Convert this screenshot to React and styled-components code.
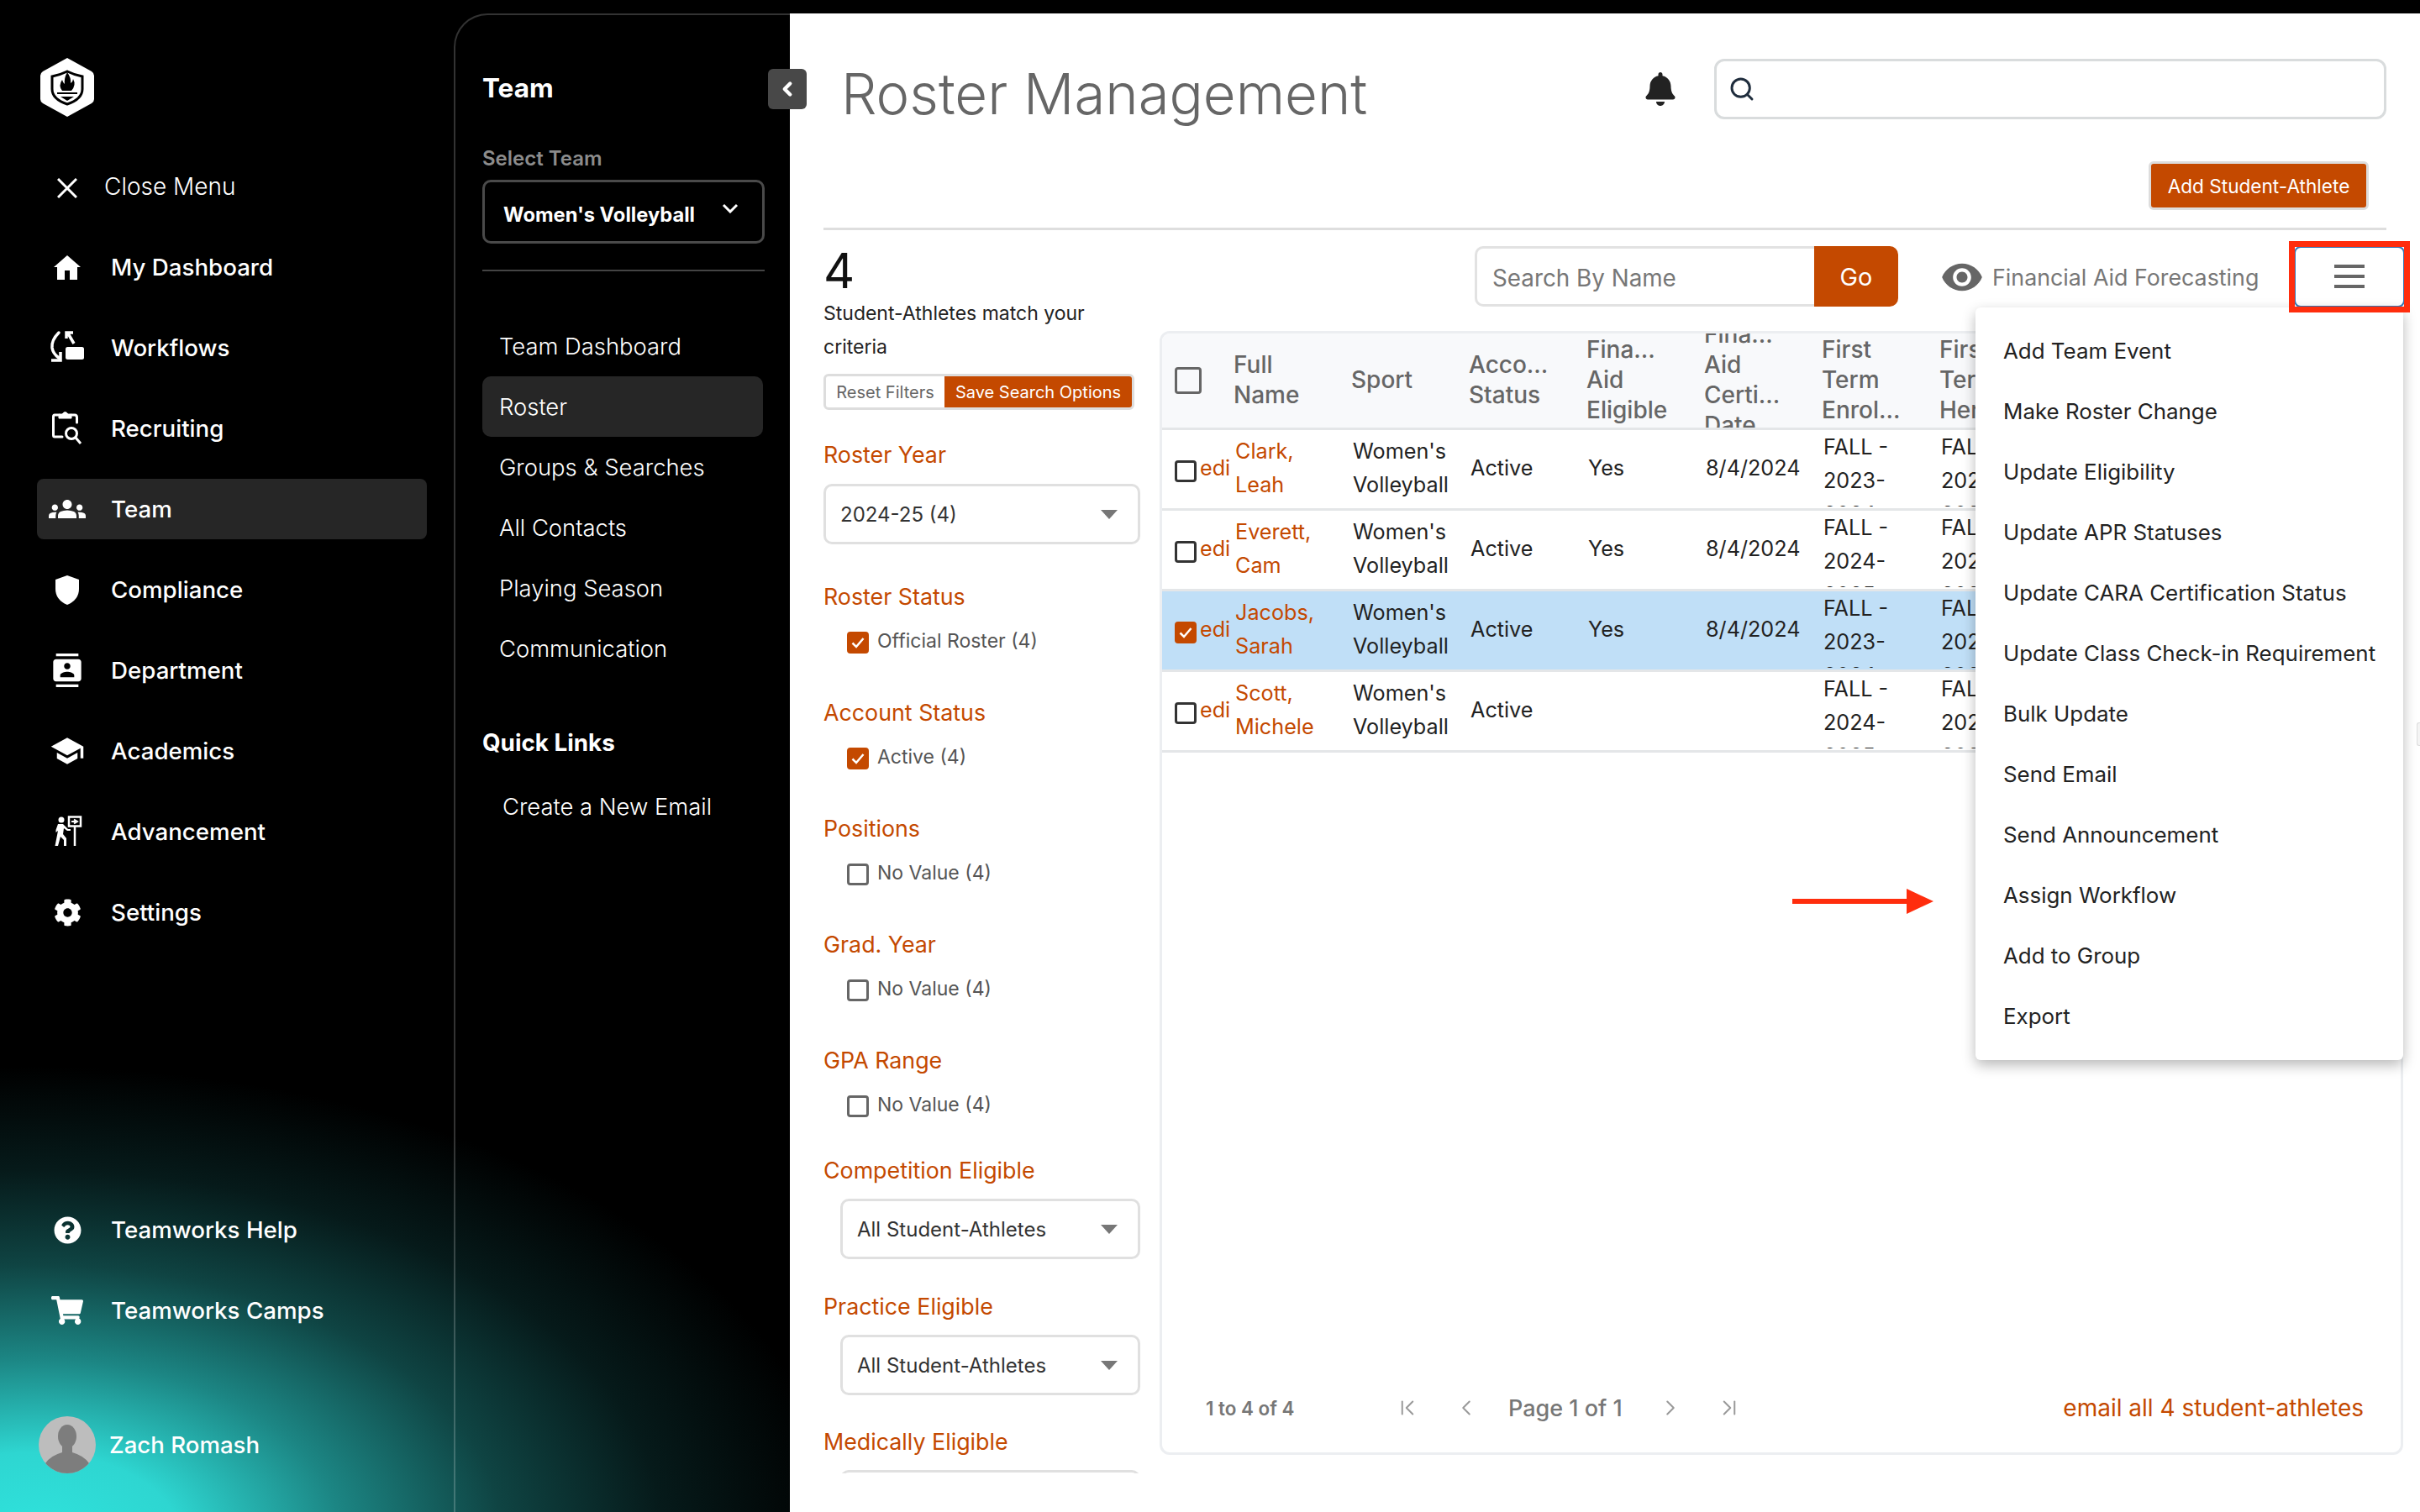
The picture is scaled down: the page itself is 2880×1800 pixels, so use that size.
import styled, { createGlobalStyle } from "styled-components";
import { FaBell, FaCog, FaQuestionCircle, FaShoppingCart } from "react-icons/fa";
import { MdContacts, MdGroups, MdSchool, MdVisibility } from "react-icons/md";
import { ChevronFirst, ChevronLast, ChevronLeft, ChevronRight, Search } from "lucide-react";

const ORANGE = "#c44900";

const GlobalStyle = createGlobalStyle`
  html, body {
    margin: 0;
    padding: 0;
    background: #000;
    font-family: "Inter", "Liberation Sans", sans-serif;
  }
  * { box-sizing: border-box; }
`;

const Shell = styled.div`
  position: relative;
  display: flex;
  width: 2880px;
  height: 1800px;
  overflow: hidden;
  background:
    radial-gradient(ellipse 960px 560px at 40px 1830px,
      #2fe3dd 0%, #2ed6d1 18%, #1c8684 38%, #0f4443 58%, #061a1a 78%, #000 100%),
    #000;
`;

const Rail = styled.nav`
  width: 540px;
  flex: none;
  display: flex;
  flex-direction: column;
  padding: 68px 32px 46px 44px;
  color: #fff;
`;

const LogoWrap = styled.div`
  height: 72px;
  margin-bottom: 46px;
  padding-left: 3px;
`;

const CloseRow = styled.div`
  display: flex;
  align-items: center;
  height: 72px;
  margin-bottom: 24px;
  padding-left: 24px;
  gap: 32px;
  font-size: 28px;
  font-weight: 300;
`;

const CloseIcon = styled.svg`
  margin-top: 4px;
`;

const NavList = styled.div`
  display: flex;
  flex-direction: column;
  gap: 24px;
`;

const BottomList = styled(NavList)`
  margin-top: auto;
`;

const NavItem = styled.div`
  display: flex;
  align-items: center;
  height: 72px;
  border-radius: 8px;
  font-size: 27.7px;
  font-weight: 500;
  background: ${(p) => (p.$active ? "#262626" : "transparent")};
`;

const NavIcon = styled.span`
  width: 72px;
  margin-right: 16px;
  display: flex;
  align-items: center;
  justify-content: center;
  font-size: 32px;
`;

const UserRow = styled.div`
  display: flex;
  align-items: center;
  gap: 16px;
  height: 68px;
  margin-top: 90px;
  margin-left: 2px;
  font-size: 27.6px;
  font-weight: 500;
`;

const Avatar = styled.span`
  width: 68px;
  height: 68px;
  border-radius: 50%;
  overflow: hidden;
  display: block;
  background: #bdbdbd;
`;

const Panel = styled.aside`
  width: 400px;
  flex: none;
  margin-top: 16px;
  padding: 67px 30px 0 32px;
  border-left: 2px solid rgba(255, 255, 255, 0.2);
  border-top: 2px solid rgba(255, 255, 255, 0.2);
  border-top-left-radius: 40px;
  color: #fff;
`;

const PanelTitle = styled.div`
  font-size: 31.5px;
  line-height: 40px;
  font-weight: 700;
`;

const PanelLabel = styled.div`
  margin-top: 48px;
  font-size: 24px;
  line-height: 32px;
  font-weight: 600;
  color: #8c8c8c;
`;

const TeamSelect = styled.div`
  display: flex;
  align-items: center;
  justify-content: space-between;
  height: 76px;
  margin-top: 9px;
  padding: 6px 28px 0 22px;
  border: 3px solid #4a4a4a;
  border-radius: 10px;
  font-size: 23.7px;
  font-weight: 700;
`;

const SelectChevron = styled.svg`
  margin-top: -14px;
`;

const PanelRule = styled.div`
  height: 2px;
  margin-top: 31px;
  background: #444;
`;

const SubNav = styled.div`
  margin: 53px 2px 0 0;
`;

const SubItem = styled.div`
  display: flex;
  align-items: center;
  height: 72px;
  padding-left: 20px;
  border-radius: 10px;
  font-size: 27.4px;
  font-weight: 300;
  background: ${(p) => (p.$active ? "#262626" : "transparent")};
`;

const QuickTitle = styled.div`
  margin-top: 56px;
  font-size: 27.8px;
  line-height: 40px;
  font-weight: 700;
`;

const QuickItem = styled(SubItem)`
  margin-top: 20px;
  padding-left: 24px;
`;

const CollapseButton = styled.button`
  position: absolute;
  left: 914px;
  top: 82px;
  width: 46px;
  height: 48px;
  padding: 0;
  border: 0;
  border-radius: 6px;
  background: #484848;
  color: #fff;
  display: flex;
  align-items: center;
  justify-content: center;
`;

const EdgeHandle = styled.div`
  position: absolute;
  right: 0;
  top: 860px;
  width: 4px;
  height: 28px;
  border: 1px solid #ddd;
  border-right: 0;
  border-radius: 3px 0 0 3px;
  background: #f4f4f4;
`;

const Main = styled.main`
  flex: 1;
  margin-top: 16px;
  padding: 54px 20px 0 40px;
  background: #fff;
  color: #222;
`;

const TopRow = styled.div`
  display: flex;
  align-items: center;
  height: 72px;
  padding-right: 20px;
`;

const PageTitle = styled.h1`
  margin: 10px auto 0 21px;
  font-size: 67px;
  font-weight: 300;
  color: #666;
`;

const BellWrap = styled.span`
  display: flex;
  margin-right: 44px;
  font-size: 40px;
  color: #222;
`;

const GlobalSearch = styled.div`
  width: 800px;
  height: 72px;
  display: flex;
  align-items: center;
  padding-left: 14px;
  border: 3px solid #d9dcdd;
  border-radius: 12px;
  color: #1f2d3d;
`;

const ActionRow = styled.div`
  display: flex;
  justify-content: flex-end;
  margin-top: 50px;
  padding-right: 41px;
`;

const AddButton = styled.button`
  width: 262px;
  height: 58px;
  padding: 0;
  border: 3px solid #ddd;
  border-radius: 6px;
  background: ${ORANGE};
  color: #fff;
  white-space: nowrap;
  font: 400 22.6px "Inter", sans-serif;
`;

const HeaderRule = styled.div`
  height: 3px;
  margin: 21px 20px 0 0;
  background: #dedede;
`;

const Body = styled.div`
  display: grid;
  grid-template-columns: 377px 1480px;
  column-gap: 23px;
  height: 1480px;
`;

const FilterColumn = styled.div`
  height: 1480px;
  max-height: 1465px;
  margin-top: 15px;
  overflow: hidden;
`;

const Count = styled.div`
  padding-top: 2px;
  font-size: 57.6px;
  line-height: 62px;
  color: #111;
`;

const CountText = styled.div`
  font-size: 23px;
  line-height: 40px;
  color: #222;
  font-weight: 400;
`;

const ButtonGroup = styled.div`
  display: flex;
  width: 370px;
  height: 43px;
  margin-top: 12px;
  border: 3px solid #ddd;
  border-radius: 6px;
  overflow: hidden;
  font-size: 20px;
`;

const ResetPart = styled.div`
  width: 141px;
  display: flex;
  align-items: center;
  justify-content: center;
  color: #666;
`;

const SavePart = styled(ResetPart)`
  flex: 1;
  background: ${ORANGE};
  color: #fff;
`;

const FilterLabel = styled.div`
  margin-top: ${(p) => p.$top}px;
  font-size: 26.8px;
  line-height: 40px;
  color: ${ORANGE};
`;

const FilterSelect = styled.div`
  display: flex;
  align-items: center;
  justify-content: space-between;
  height: 72px;
  margin-top: ${(p) => (p.$indent ? 14 : 15)}px;
  margin-left: ${(p) => p.$indent || 0}px;
  padding: 0 24px 0 17px;
  border: 3px solid #e0e0e0;
  border-radius: 10px;
  font-size: 24px;
  color: #333;
`;

const Caret = styled.span`
  width: 0;
  height: 0;
  border-left: 10px solid transparent;
  border-right: 10px solid transparent;
  border-top: 11px solid #777;
`;

const CheckRow = styled.div`
  display: flex;
  align-items: center;
  gap: 10px;
  height: 40px;
  margin-top: 15px;
  padding-left: 28px;
  font-size: 23px;
  color: #555;
`;

const CheckText = styled.span`
  padding-bottom: 4px;
`;

const Box = styled.span`
  flex: none;
  width: ${(p) => p.$size}px;
  height: ${(p) => p.$size}px;
  display: flex;
  align-items: center;
  justify-content: center;
  border: 3.5px solid ${(p) => (p.$checked ? ORANGE : p.$color || "#666")};
  border-radius: 4px;
  background: ${(p) => (p.$checked ? ORANGE : "transparent")};
`;

const RightColumn = styled.div`
  display: flex;
  flex-direction: column;
  padding-top: 19px;
`;

const Toolbar = styled.div`
  display: flex;
  align-items: center;
  height: 72px;
  margin-right: -2px;
  padding-left: 375px;
`;

const NameInput = styled.div`
  width: 404px;
  height: 72px;
  display: flex;
  align-items: center;
  padding: 3px 0 0 18px;
  border: 3px solid #e2e2e2;
  border-right: 0;
  border-radius: 10px 0 0 10px;
  font-size: 27.8px;
  color: #777;
`;

const GoButton = styled.div`
  width: 100px;
  height: 72px;
  display: flex;
  align-items: center;
  justify-content: center;
  border-radius: 0 10px 10px 0;
  background: ${ORANGE};
  color: #fff;
  font-size: 28.8px;
`;

const Forecast = styled.div`
  display: flex;
  align-items: center;
  gap: 12px;
  margin-left: 50px;
  padding-top: 2px;
  font-size: 26.8px;
  color: #777;
`;

const EyeWrap = styled.span`
  display: flex;
  font-size: 52px;
  color: #666;
  margin-right: -2px;
`;

const MenuWrap = styled.div`
  position: relative;
  width: 132px;
  height: 73px;
  margin-left: auto;
`;

const MenuButton = styled.button`
  width: 100%;
  height: 100%;
  padding: 0;
  border: 2px solid #3577b5;
  border-radius: 8px;
  background: #fff;
  display: flex;
  flex-direction: column;
  align-items: center;
  justify-content: center;
  gap: 8px;
`;

const BurgerLine = styled.span`
  width: 36px;
  height: 4px;
  background: #666;
`;

const RedFrame = styled.div`
  position: absolute;
  inset: -6px;
  border: 7px solid #ff2d0d;
  z-index: 3;
`;

const ActionMenu = styled.div`
  position: absolute;
  top: 73px;
  right: 2px;
  z-index: 2;
  width: 509px;
  height: 896px;
  padding: 16px 0 0 33px;
  border-radius: 6px;
  background: #fff;
  box-shadow: 0 6px 16px rgba(0, 0, 0, 0.28);
`;

const MenuEntry = styled.div`
  display: flex;
  align-items: center;
  height: 72px;
  font-size: 25.9px;
  color: #222;
`;

const GridCard = styled.section`
  position: relative;
  display: flex;
  flex-direction: column;
  height: 1338px;
  margin-top: 29px;
  border: 3px solid #eceef1;
  border-radius: 12px;
  overflow: hidden;
`;

const GridHead = styled.div`
  display: grid;
  grid-template-columns: 85px repeat(7, 140px);
  flex: none;
  height: 115px;
  border-bottom: 3px solid #e4e6e8;
  background: #f8f9fb;
`;

const HeadCell = styled.div`
  display: flex;
  flex-direction: column;
  justify-content: center;
  height: 112px;
  padding-bottom: 3px;
  overflow: hidden;
  font-size: 28px;
  line-height: 36px;
  font-weight: 500;
  color: #666;
`;

const HeadLine = styled.span`
  display: block;
  flex: none;
  white-space: nowrap;
`;

const HeadBoxCell = styled.div`
  display: flex;
  align-items: center;
  padding-left: 15px;
`;

const GridRow = styled.div`
  display: grid;
  grid-template-columns: 85px repeat(7, 140px);
  flex: none;
  height: 96px;
  border-bottom: 3px solid #e4e6e8;
  background: ${(p) => (p.$selected ? "#c0dff7" : "transparent")};
  font-size: 25.2px;
  line-height: 40px;
  color: #222;
`;

const RowPick = styled.div`
  display: flex;
  align-items: center;
  gap: 4px;
  padding: 4px 0 0 15px;
  overflow: hidden;
`;

const EditLink = styled.span`
  display: block;
  width: 35px;
  overflow: hidden;
  margin-top: -8px;
  color: ${ORANGE};
`;

const Cell = styled.div`
  display: flex;
  align-items: ${(p) => (p.$clip ? "flex-start" : "center")};
  height: ${(p) => (p.$clip ? 91 : 93)}px;
  padding: 0 18px ${(p) => (p.$clip ? "0" : "4px")} 2px;
  overflow: hidden;
  color: ${(p) => (p.$link ? ORANGE : "inherit")};
`;

const GridFooter = styled.div`
  display: flex;
  align-items: center;
  margin-top: auto;
  height: 40px;
  margin-bottom: 33px;
  padding: 0 44px 0 52px;
  color: #777;
`;

const RangeText = styled.span`
  width: 225px;
  font-size: 22.4px;
  font-weight: 600;
`;

const Pager = styled.div`
  display: flex;
  align-items: center;
  gap: 40px;
  color: #999;
`;

const PageText = styled.span`
  margin: 0 2px 0 -5px;
  font-size: 27px;
  font-weight: 500;
  color: #777;
`;

const EmailLink = styled.span`
  margin-left: auto;
  font-size: 28px;
  color: ${ORANGE};
`;

const RedArrow = styled.svg`
  position: absolute;
  left: 750px;
  top: 660px;
`;

const Logo = () => (
  <svg width="66" height="72" viewBox="0 0 66 72">
    <path d="M33 1 L62 17 Q65 19 65 22 V50 Q65 53 62 55 L33 71 L4 55 Q1 53 1 50 V22 Q1 19 4 17 Z" fill="#fff" />
    <path d="M15 23 Q25 21 33 17 Q41 21 51 23 V38 Q51 50 33 56 Q15 50 15 38 Z" fill="none" stroke="#000" strokeWidth="3" />
    <path d="M33 18 Q38 25 37 31 Q40 29 40 26 Q44 33 38 40 H27 Q22 34 27 27 Q28 31 30 32 Q29 25 33 18 Z" fill="#000" />
    <path d="M21 43 H45" stroke="#000" strokeWidth="2" />
    <path d="M25 47 H41 L33 52 Z" fill="#000" />
  </svg>
);

const HomeIcon = () => (
  <svg width="32" height="29" viewBox="0 0 32 29">
    <path d="M16 0 L32 14 H28 V29 H19 V18 H13 V29 H4 V14 H0 Z" fill="#fff" />
  </svg>
);

const ShieldIcon = () => (
  <svg width="28" height="35" viewBox="0 0 28 35">
    <path d="M14 0 L28 5 V16 Q28 29 14 35 Q0 29 0 16 V5 Z" fill="#fff" />
  </svg>
);

const WorkflowIcon = () => (
  <svg width="42" height="42" viewBox="0 0 42 42" fill="none">
    <path d="M11 3 Q2 12 3 21 Q4 28 11 33" stroke="#fff" strokeWidth="3.5" strokeLinecap="round" />
    <path d="M2 36 H13 V26" stroke="#fff" strokeWidth="3.5" />
    <rect x="19" y="20" width="22" height="15" rx="2.5" fill="#fff" />
    <path d="M29 16 L22 4 M20 10 V3 H28" stroke="#fff" strokeWidth="3.5" />
  </svg>
);

const RecruitIcon = () => (
  <svg width="36" height="40" viewBox="0 0 36 40" fill="none" stroke="#fff">
    <path d="M12 30 H3 Q1.5 30 1.5 28 V6 Q1.5 4 3 4 H8 M23 4 H27 Q29.5 4 29.5 7 V13" strokeWidth="3" strokeLinecap="round" />
    <path d="M8 3 H12 Q15.5 -2 19 3 H23 V8 H8 Z" fill="#fff" strokeWidth="1" />
    <circle cx="23" cy="26" r="6.5" strokeWidth="3" />
    <path d="M28 31 L34 38" strokeWidth="3" />
  </svg>
);

const AdvanceIcon = () => (
  <svg width="38" height="38" viewBox="0 0 38 38" fill="none">
    <circle cx="12" cy="5" r="3.5" fill="#fff" />
    <path d="M8 10 H14 L20 16 H23 V18 H19 L15 15 L14 22 L18 27 V36 H15 V29 L11 25 L8 36 H4.5 L8 18 L5.5 20 V17 Z" fill="#fff" />
    <rect x="21" y="1.5" width="14" height="11" stroke="#fff" strokeWidth="2.5" />
    <path d="M24 7 H29 M27 4.5 L31 7 L27 9.5" stroke="#fff" strokeWidth="2" />
    <path d="M28 13 V36" stroke="#fff" strokeWidth="2.5" />
  </svg>
);

const CheckMark = () => (
  <svg width="18" height="18" viewBox="0 0 18 18" fill="none">
    <path d="M2.5 9.5 L7 14 L15.5 4" stroke="#fff" strokeWidth="2.5" />
  </svg>
);

const primaryNav = [
  { label: "My Dashboard", icon: <HomeIcon /> },
  { label: "Workflows", icon: <WorkflowIcon /> },
  { label: "Recruiting", icon: <RecruitIcon /> },
  { label: "Team", icon: <MdGroups size={44} />, active: true },
  { label: "Compliance", icon: <ShieldIcon /> },
  { label: "Department", icon: <MdContacts size={40} /> },
  { label: "Academics", icon: <MdSchool size={42} /> },
  { label: "Advancement", icon: <AdvanceIcon /> },
  { label: "Settings", icon: <FaCog size={33} /> },
];

const subNav = ["Team Dashboard", "Roster", "Groups & Searches", "All Contacts", "Playing Season", "Communication"];

const menuEntries = [
  "Add Team Event",
  "Make Roster Change",
  "Update Eligibility",
  "Update APR Statuses",
  "Update CARA Certification Status",
  "Update Class Check-in Requirement",
  "Bulk Update",
  "Send Email",
  "Send Announcement",
  "Assign Workflow",
  "Add to Group",
  "Export",
];

const headColumns = [
  ["Full", "Name"],
  ["Sport"],
  ["Acco...", "Status"],
  ["Fina...", "Aid", "Eligible"],
  ["Fina...", "Aid", "Certi...", "Date"],
  ["First", "Term", "Enrol..."],
  ["First", "Term", "Here..."],
];

const athletes = [
  { name: "Clark, Leah", aid: "Yes", date: "8/4/2024", term: "FALL - 2023-2024" },
  { name: "Everett, Cam", aid: "Yes", date: "8/4/2024", term: "FALL - 2024-2025" },
  { name: "Jacobs, Sarah", aid: "Yes", date: "8/4/2024", term: "FALL - 2023-2024", selected: true },
  { name: "Scott, Michele", aid: "", date: "", term: "FALL - 2024-2025" },
];

const checkFilters = [
  { label: "Roster Status", option: "Official Roster (4)", checked: true, top: 42 },
  { label: "Account Status", option: "Active (4)", checked: true, top: 43 },
  { label: "Positions", option: "No Value (4)", top: 43 },
  { label: "Grad. Year", option: "No Value (4)", top: 43 },
  { label: "GPA Range", option: "No Value (4)", top: 43 },
];

const App = () => {
  return (
    <>
      <GlobalStyle />
      <Shell>
        <Rail>
          <LogoWrap>
            <Logo />
          </LogoWrap>
          <CloseRow>
            <CloseIcon width="24" height="24" viewBox="0 0 24 24" fill="none">
              <path d="M1 1 L23 23 M23 1 L1 23" stroke="#fff" strokeWidth="3" />
            </CloseIcon>
            Close Menu
          </CloseRow>
          <NavList>
            {primaryNav.map((item) => (
              <NavItem key={item.label} $active={item.active}>
                <NavIcon>{item.icon}</NavIcon>
                {item.label}
              </NavItem>
            ))}
          </NavList>
          <BottomList>
            <NavItem>
              <NavIcon>
                <FaQuestionCircle size={33} />
              </NavIcon>
              Teamworks Help
            </NavItem>
            <NavItem>
              <NavIcon>
                <FaShoppingCart size={38} />
              </NavIcon>
              Teamworks Camps
            </NavItem>
          </BottomList>
          <UserRow>
            <Avatar>
              <svg width="68" height="68" viewBox="0 0 68 68">
                <ellipse cx="34" cy="24" rx="11" ry="14" fill="#7d7d7d" />
                <path d="M28 36 V43 Q14 47 8 56 V68 H60 V56 Q54 47 40 43 V36 Z" fill="#7d7d7d" />
              </svg>
            </Avatar>
            Zach Romash
          </UserRow>
        </Rail>

        <Panel>
          <PanelTitle>Team</PanelTitle>
          <PanelLabel>Select Team</PanelLabel>
          <TeamSelect>
            Women's Volleyball
            <SelectChevron width="20" height="12" viewBox="0 0 20 12" fill="none">
              <path d="M2 2 L10 10 L18 2" stroke="#fff" strokeWidth="3" />
            </SelectChevron>
          </TeamSelect>
          <PanelRule />
          <SubNav>
            {subNav.map((label) => (
              <SubItem key={label} $active={label === "Roster"}>
                {label}
              </SubItem>
            ))}
          </SubNav>
          <QuickTitle>Quick Links</QuickTitle>
          <QuickItem>Create a New Email</QuickItem>
        </Panel>

        <CollapseButton>
          <ChevronLeft size={26} strokeWidth={4} />
        </CollapseButton>

        <Main>
          <TopRow>
            <PageTitle>Roster Management</PageTitle>
            <BellWrap>
              <FaBell />
            </BellWrap>
            <GlobalSearch>
              <Search size={32} strokeWidth={2.2} />
            </GlobalSearch>
          </TopRow>
          <ActionRow>
            <AddButton>Add Student-Athlete</AddButton>
          </ActionRow>
          <HeaderRule />

          <Body>
            <FilterColumn>
              <Count>4</Count>
              <CountText>Student-Athletes match your criteria</CountText>
              <ButtonGroup>
                <ResetPart>Reset Filters</ResetPart>
                <SavePart>Save Search Options</SavePart>
              </ButtonGroup>

              <FilterLabel $top={33}>Roster Year</FilterLabel>
              <FilterSelect>
                2024-25 (4)
                <Caret />
              </FilterSelect>

              {checkFilters.map((filter) => (
                <div key={filter.label}>
                  <FilterLabel $top={filter.top}>{filter.label}</FilterLabel>
                  <CheckRow>
                    <Box $size={26} $checked={filter.checked}>
                      {filter.checked && <CheckMark />}
                    </Box>
                    <CheckText>{filter.option}</CheckText>
                  </CheckRow>
                </div>
              ))}

              <FilterLabel $top={36}>Competition Eligible</FilterLabel>
              <FilterSelect $indent={20}>
                All Student-Athletes
                <Caret />
              </FilterSelect>
              <FilterLabel $top={36}>Practice Eligible</FilterLabel>
              <FilterSelect $indent={20}>
                All Student-Athletes
                <Caret />
              </FilterSelect>
              <FilterLabel $top={35}>Medically Eligible</FilterLabel>
              <FilterSelect $indent={20}>
                All Student-Athletes
                <Caret />
              </FilterSelect>
            </FilterColumn>

            <RightColumn>
              <Toolbar>
                <NameInput>Search By Name</NameInput>
                <GoButton>Go</GoButton>
                <Forecast>
                  <EyeWrap>
                    <MdVisibility />
                  </EyeWrap>
                  Financial Aid Forecasting
                </Forecast>
                <MenuWrap>
                  <MenuButton>
                    <BurgerLine />
                    <BurgerLine />
                    <BurgerLine />
                  </MenuButton>
                  <RedFrame />
                  <ActionMenu>
                    {menuEntries.map((entry) => (
                      <MenuEntry key={entry}>{entry}</MenuEntry>
                    ))}
                  </ActionMenu>
                </MenuWrap>
              </Toolbar>

              <GridCard>
                <GridHead>
                  <HeadBoxCell>
                    <Box $size={32} />
                  </HeadBoxCell>
                  {headColumns.map((lines, index) => (
                    <HeadCell key={index}>
                      {lines.map((line) => (
                        <HeadLine key={line}>{line}</HeadLine>
                      ))}
                    </HeadCell>
                  ))}
                </GridHead>

                {athletes.map((athlete) => (
                  <GridRow key={athlete.name} $selected={athlete.selected}>
                    <RowPick>
                      <Box $size={26} $color="#333" $checked={athlete.selected}>
                        {athlete.selected && <CheckMark />}
                      </Box>
                      <EditLink>edit</EditLink>
                    </RowPick>
                    <Cell $link>{athlete.name}</Cell>
                    <Cell>Women's Volleyball</Cell>
                    <Cell>Active</Cell>
                    <Cell>{athlete.aid}</Cell>
                    <Cell>{athlete.date}</Cell>
                    <Cell $clip>{athlete.term}</Cell>
                    <Cell $clip>{athlete.term}</Cell>
                  </GridRow>
                ))}

                <RedArrow width="170" height="32" viewBox="0 0 170 32">
                  <path d="M0 13 H136 V1 L168 16 L136 31 V19 H0 Z" fill="#ff2d0d" />
                </RedArrow>

                <GridFooter>
                  <RangeText>1 to 4 of 4</RangeText>
                  <Pager>
                    <ChevronFirst size={30} strokeWidth={1.6} />
                    <ChevronLeft size={30} strokeWidth={1.6} />
                    <PageText>Page 1 of 1</PageText>
                    <ChevronRight size={30} strokeWidth={1.6} />
                    <ChevronLast size={30} strokeWidth={1.6} />
                  </Pager>
                  <EmailLink>email all 4 student-athletes</EmailLink>
                </GridFooter>
              </GridCard>
            </RightColumn>
          </Body>
        </Main>
        <EdgeHandle />
      </Shell>
    </>
  );
};

export default App;
